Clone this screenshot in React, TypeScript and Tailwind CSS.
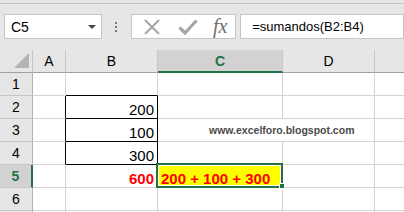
import React from "react"

const font = { fontFamily: '"Liberation Sans", Arial, sans-serif' }

function XIcon() {
  return (
    <svg width="18" height="16" viewBox="0 0 18 16" fill="none">
      <path d="M2 1 L16 15 M16 1 L2 15" stroke="#a6a6a6" strokeWidth="2" />
    </svg>
  )
}

function CheckIcon() {
  return (
    <svg width="20" height="16" viewBox="0 0 20 16" fill="none">
      <path d="M1.5 8.5 L7 14 L18.5 1.5" stroke="#a6a6a6" strokeWidth="3.2" strokeLinejoin="miter" />
    </svg>
  )
}

export default function App() {
  return (
    <div
      className="w-[404px] h-[212px] overflow-hidden bg-[#e6e6e6] text-black"
      style={font}
    >
      {/* top strip */}
      <div className="h-[4px] border-b border-[#c6c6c6]" />

      {/* name box + formula bar */}
      <div className="h-[46px] flex items-start pt-[10px] pl-[4px]">
        <div className="w-[101px] h-[25px] bg-white border border-[#c6c6c6] flex items-center justify-between pl-[6px] pr-[5px]">
          <span className="text-[14px] leading-none">C5</span>
          <span className="w-0 h-0 border-l-[4px] border-r-[4px] border-t-[4px] border-l-transparent border-r-transparent border-t-[#444]" />
        </div>
        <div className="w-[31px] h-[25px] flex flex-col items-center justify-center gap-[2px]">
          <span className="w-[2px] h-[2px] bg-[#777]" />
          <span className="w-[2px] h-[2px] bg-[#777]" />
          <span className="w-[2px] h-[2px] bg-[#777]" />
        </div>
        <div className="w-[109px] h-[25px] bg-white border border-[#c6c6c6] flex items-center">
          <div className="w-[37px] flex justify-center pl-[2px]">
            <XIcon />
          </div>
          <div className="w-[36px] flex justify-center pl-[2px]">
            <CheckIcon />
          </div>
          <div
            className="flex-1 flex justify-center text-[20px] italic leading-none text-[#6e6e6e] pb-[2px]"
            style={{ fontFamily: '"Liberation Serif", "Times New Roman", serif' }}
          >
            fx
          </div>
        </div>
        <div className="ml-[4px] w-[170px] h-[25px] bg-white border border-[#c6c6c6] flex items-center pl-[11px]">
          <span className="text-[13px] leading-none whitespace-nowrap">=sumandos(B2:B4)</span>
        </div>
      </div>

      {/* grid */}
      <div className="grid grid-cols-[33px_33px_92px_125px_92px_1fr] auto-rows-[23px] bg-white">
        {/* header row */}
        <div className="relative bg-[#e6e6e6] border-r border-b border-r-[#c6c6c6] border-b-[#a0a0a0]">
          <svg className="absolute right-[3px] bottom-[4px]" width="15" height="15" viewBox="0 0 15 15">
            <polygon points="15,0 15,15 0,15" fill="#b4b4b4" />
          </svg>
        </div>
        <div className="bg-[#e6e6e6] border-r border-b border-r-[#c6c6c6] border-b-[#a0a0a0] flex items-center justify-center text-[14px]">A</div>
        <div className="bg-[#e6e6e6] border-r border-b border-r-[#c6c6c6] border-b-[#a0a0a0] flex items-center justify-center text-[14px]">B</div>
        <div className="bg-[#d2d2d2] border-r border-b-2 border-r-[#c6c6c6] border-b-[#217346] flex items-center justify-center text-[14px] font-bold text-[#217346] pt-[1px]">C</div>
        <div className="bg-[#e6e6e6] border-r border-b border-r-[#c6c6c6] border-b-[#a0a0a0] flex items-center justify-center text-[14px]">D</div>
        <div className="bg-[#e6e6e6] border-b border-b-[#a0a0a0]" />

        {/* row 1 */}
        <div className="bg-[#e6e6e6] border-r border-b border-r-[#b4b4b4] border-b-[#c6c6c6] flex items-center justify-center text-[14px]">1</div>
        <div className="border-r border-b border-[#d4d4d4]" />
        <div className="border-r border-b border-r-[#d4d4d4] border-b-black" />
        <div className="border-r border-b border-[#d4d4d4]" />
        <div className="border-r border-b border-[#d4d4d4]" />
        <div className="border-b border-[#d4d4d4]" />

        {/* row 2 */}
        <div className="bg-[#e6e6e6] border-r border-b border-r-[#b4b4b4] border-b-[#c6c6c6] flex items-center justify-center text-[14px]">2</div>
        <div className="border-r border-b border-r-black border-b-[#d4d4d4]" />
        <div className="border-r border-b border-black flex items-end justify-end pr-[3px] text-[15px] leading-[17px]">200</div>
        <div className="border-r border-b border-[#d4d4d4]" />
        <div className="border-r border-b border-[#d4d4d4]" />
        <div className="border-b border-[#d4d4d4]" />

        {/* row 3 - C3 text spills into D3, hiding the gridline */}
        <div className="bg-[#e6e6e6] border-r border-b border-r-[#b4b4b4] border-b-[#c6c6c6] flex items-center justify-center text-[14px]">3</div>
        <div className="border-r border-b border-r-black border-b-[#d4d4d4]" />
        <div className="border-r border-b border-black flex items-end justify-end pr-[3px] text-[15px] leading-[17px]">100</div>
        <div className="relative z-10 border-b border-[#d4d4d4] flex items-center pl-[51px] overflow-visible">
          <span className="whitespace-nowrap text-[10.5px] font-bold text-[#4a4a4a] bg-white leading-[12px]">
            www.excelforo.blogspot.com
          </span>
        </div>
        <div className="border-r border-b border-[#d4d4d4]" />
        <div className="border-b border-[#d4d4d4]" />

        {/* row 4 */}
        <div className="bg-[#e6e6e6] border-r border-b border-r-[#b4b4b4] border-b-[#c6c6c6] flex items-center justify-center text-[14px]">4</div>
        <div className="border-r border-b border-r-black border-b-[#d4d4d4]" />
        <div className="border-r border-b border-black flex items-end justify-end pr-[3px] text-[15px] leading-[17px]">300</div>
        <div className="border-r border-b border-[#d4d4d4]" />
        <div className="border-r border-b border-[#d4d4d4]" />
        <div className="border-b border-[#d4d4d4]" />

        {/* row 5 */}
        <div className="bg-[#d2d2d2] border-r-2 border-b border-r-[#217346] border-b-[#c6c6c6] flex items-center justify-center text-[14px] font-bold text-[#217346]">5</div>
        <div className="border-r border-b border-[#d4d4d4]" />
        <div className="border-r border-b border-[#d4d4d4] flex items-end justify-end pr-[3px] text-[15px] leading-[17px] font-bold text-[#ff0000]">600</div>
        <div className="relative border-r border-b border-[#d4d4d4] bg-[#ffff00] flex items-end pl-[3px] text-[15px] leading-[17px] font-bold text-[#ff0000]">
          <span className="whitespace-nowrap">200 + 100 + 300</span>
          {/* selection box + fill handle */}
          <div className="absolute left-[-2px] top-[-2px] w-[127px] h-[25px] border-2 border-[#217346]">
            <div className="absolute inset-0 border border-white" />
          </div>
          <div className="absolute left-[121px] top-[18px] w-[6px] h-[6px] bg-[#217346] border border-white" />
        </div>
        <div className="border-r border-b border-[#d4d4d4]" />
        <div className="border-b border-[#d4d4d4]" />

        {/* row 6 */}
        <div className="bg-[#e6e6e6] border-r border-b border-r-[#b4b4b4] border-b-[#c6c6c6] flex items-center justify-center text-[14px]">6</div>
        <div className="border-r border-b border-[#d4d4d4]" />
        <div className="border-r border-b border-[#d4d4d4]" />
        <div className="border-r border-b border-[#d4d4d4]" />
        <div className="border-r border-b border-[#d4d4d4]" />
        <div className="border-b border-[#d4d4d4]" />

        {/* row 7 */}
        <div className="bg-[#e6e6e6] border-r border-r-[#b4b4b4]" />
        <div className="border-r border-[#d4d4d4]" />
        <div className="border-r border-[#d4d4d4]" />
        <div className="border-r border-[#d4d4d4]" />
        <div className="border-r border-[#d4d4d4]" />
        <div />
      </div>
    </div>
  )
}
